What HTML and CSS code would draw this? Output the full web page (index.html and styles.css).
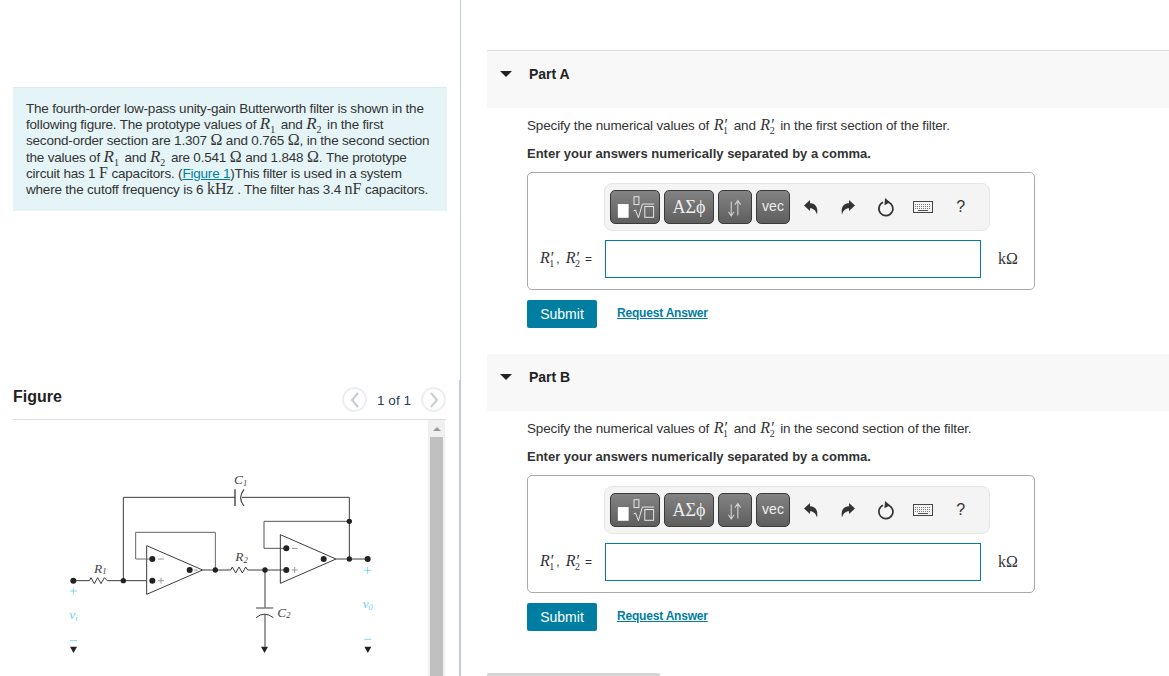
FILE: index.html
```html
<!DOCTYPE html>
<html lang="en">
<head>
  <meta charset="UTF-8" />
  <title>Butterworth filter problem</title>
  <link rel="stylesheet" href="styles.css">
</head>
<body>
  <svg class="icon-defs" aria-hidden="true">
    <symbol id="i-template" viewBox="0 0 49 33">
      <rect x="7" y="13" width="11" height="14" fill="#fff"/>
      <rect x="23.500" y="5.500" width="5" height="8" fill="none" stroke="#e8e8e8"/>
      <path d="M23 20l2 -1 3 8 4 -14h12" fill="none" stroke="#e8e8e8"/>
      <rect x="34.500" y="15.500" width="9" height="11" fill="none" stroke="#e8e8e8"/>
    </symbol>
    <symbol id="i-updown" viewBox="0 0 34 33">
      <path d="M13 10v15M10 21l3 4.500 3 -4.500M20 25v-15M17 13.500l3 -4.500 3 4.500" fill="none" stroke="#cfcfcf" stroke-width="1.200"/>
    </symbol>
    <symbol id="i-undo" viewBox="0 0 14 15">
      <path d="M0 5.500L6 0v3.300C11 3.300 14.500 7 13 14.500 12 10.500 9.500 8.200 6 8.200V11z" fill="#333"/>
    </symbol>
    <symbol id="i-redo" viewBox="0 0 14 15">
      <path d="M14 5.500L8 0v3.300C3 3.300 -.5 7 1 14.500 2 10.500 4.500 8.200 8 8.200V11z" fill="#333"/>
    </symbol>
    <symbol id="i-reset" viewBox="0 0 18 19">
      <path d="M6 4.300A7 7 0 1 0 11 4" fill="none" stroke="#333" stroke-width="1.700"/>
      <path d="M8 0l5 4.200 -5.500 3z" fill="#333"/>
    </symbol>
    <symbol id="i-keyboard" viewBox="0 0 20 12">
      <rect x=".5" y=".5" width="19" height="11" fill="#f4f4f4" stroke="#444"/>
      <path d="M2 3.500h16M2 5.500h16M2 7.500h16" stroke="#777" stroke-dasharray="1 1"/>
      <path d="M5 9.500h10" stroke="#555"/>
    </symbol>
  </svg>

  <div class="page">
    <div class="left">
      <div class="statement">
        The fourth-order low-pass unity-gain Butterworth filter is shown in the<br>
        following figure. The prototype values of <i class="m">R<sub>1</sub></i> and <i class="m">R<sub>2</sub></i> in the first<br>
        second-order section are 1.307 <span class="m">Ω</span> and 0.765 <span class="m">Ω</span>, in the second section<br>
        the values of <i class="m">R<sub>1</sub></i> and <i class="m">R<sub>2</sub></i> are 0.541 <span class="m">Ω</span> and 1.848 <span class="m">Ω</span>. The prototype<br>
        circuit has 1 <span class="m">F</span> capacitors. (<a href="#fig">Figure 1</a>)This filter is used in a system<br>
        where the cutoff frequency is 6 <span class="m">kHz</span> . The filter has 3.4 <span class="m">nF</span> capacitors.
      </div>

      <div class="figure" id="fig">
        <div class="figure-head">
          <h2>Figure</h2>
          <div class="pager">
            <span class="pager-btn"><svg width="10" height="16" viewBox="0 0 10 16"><path d="M8 1L2 8l6 7" fill="none" stroke="#c5ced5" stroke-width="2"/></svg></span>
            <span class="pager-text">1 of 1</span>
            <span class="pager-btn"><svg width="10" height="16" viewBox="0 0 10 16"><path d="M2 1l6 7 -6 7" fill="none" stroke="#c5ced5" stroke-width="2"/></svg></span>
          </div>
        </div>
        <div class="figure-body">
          <div class="figure-canvas">
            <svg class="circuit" width="350" height="216" viewBox="0 0 1050 648">
              <g fill="none" stroke="#3c3c3c" stroke-width="3">
                <path d="M100 362H148l5 -9 10 18 10 -18 10 18 10 -18 9 9H320"/>
                <path d="M250 362V112H585M606 112H928V297"/>
                <path d="M585 88V138" stroke-width="4"/>
                <path d="M612 88Q592 113 612 138" stroke-width="3.500"/>
                <path d="M320 257V403L488 330Z"/>
                <path d="M337 297H287V217H526V330" stroke="#666"/>
                <path d="M488 330H572l5 -9 10 18 10 -18 10 18 10 -18 6 9H738"/>
                <path d="M721 224V370L888 297Z"/>
                <path d="M739 265H672V184H928" stroke="#555"/>
                <path d="M888 297H983"/>
                <path d="M675 330V443M648 444H700"/>
                <path d="M648 473Q674 452 700 473M675 462V560"/>
              </g>
              <g fill="#222">
                <circle cx="100" cy="362" r="9"/>
                <circle cx="250" cy="362" r="8"/>
                <circle cx="337" cy="362" r="9"/>
                <circle cx="337" cy="297" r="9"/>
                <circle cx="449" cy="330" r="9"/>
                <circle cx="526" cy="330" r="8"/>
                <circle cx="675" cy="330" r="8"/>
                <circle cx="739" cy="330" r="9"/>
                <circle cx="739" cy="265" r="9"/>
                <circle cx="851" cy="297" r="9"/>
                <circle cx="928" cy="184" r="8"/>
                <circle cx="928" cy="297" r="8"/>
                <circle cx="983" cy="297" r="9"/>
                <path d="M90 560h21l-10.500 19zM663 560h21l-10.500 19zM973 560h21l-10.500 19z"/>
              </g>
              <g stroke="#999" stroke-width="3">
                <path d="M354 362h18M363 353v18M354 297h18M755 330h18M764 321v18M755 265h18M461 330h12"/>
              </g>
              <g stroke="#6fd0ee" stroke-width="2.500">
                <path d="M90 393h21M100 383v21M973 331h21M983 321v21M90 542h21M973 538h21"/>
              </g>
              <g class="circuit-label">
                <text x="582" y="72">C<tspan class="circuit-sub" dy="5">1</tspan></text>
                <text x="162" y="338">R<tspan class="circuit-sub" dy="5">1</tspan></text>
                <text x="586" y="303">R<tspan class="circuit-sub" dy="5">2</tspan></text>
                <text x="712" y="470">C<tspan class="circuit-sub" dy="5">2</tspan></text>
              </g>
              <g class="circuit-label circuit-label-v">
                <text x="88" y="478">v<tspan class="circuit-sub" dy="5">i</tspan></text>
                <text x="968" y="444">v<tspan class="circuit-sub" dy="5">0</tspan></text>
              </g>
            </svg>
          </div>
          <div class="scrollbar">
            <span class="scroll-up"></span>
            <span class="scroll-thumb"></span>
          </div>
        </div>
      </div>
    </div>

    <div class="right">
      <section class="part">
        <div class="part-head"><span class="caret"></span><h3>Part A</h3></div>
        <div class="part-body">
          <p>Specify the numerical values of <i class="m">R′<sub>1</sub></i> and <i class="m">R′<sub>2</sub></i> in the first section of the filter.</p>
          <p class="strong">Enter your answers numerically separated by a comma.</p>
          <div class="answer">
            <div class="toolbar">
              <span class="tool tool-wide"><svg width="49" height="33"><use href="#i-template"/></svg></span>
              <span class="tool tool-wide tool-greek">ΑΣϕ</span>
              <span class="tool tool-arrows"><svg width="34" height="33"><use href="#i-updown"/></svg></span>
              <span class="tool tool-vec">vec</span>
              <span class="tool-plain tool-undo"><svg width="14" height="15"><use href="#i-undo"/></svg></span>
              <span class="tool-plain tool-redo"><svg width="14" height="15"><use href="#i-redo"/></svg></span>
              <span class="tool-plain tool-reset"><svg width="18" height="19"><use href="#i-reset"/></svg></span>
              <span class="tool-plain tool-keys"><svg width="20" height="12"><use href="#i-keyboard"/></svg></span>
              <span class="tool-plain tool-help">?</span>
            </div>
            <div class="answer-row">
              <label class="answer-label"><i class="m">R′<sub>1</sub></i><span class="comma">,</span><i class="m">R′<sub>2</sub></i><span class="equals">=</span></label>
              <input class="answer-input" type="text" />
              <span class="unit">kΩ</span>
            </div>
          </div>
          <div class="actions">
            <button class="submit" type="button">Submit</button>
            <a class="request" href="#">Request Answer</a>
          </div>
        </div>
      </section>

      <section class="part part-next">
        <div class="part-head"><span class="caret"></span><h3>Part B</h3></div>
        <div class="part-body">
          <p>Specify the numerical values of <i class="m">R′<sub>1</sub></i> and <i class="m">R′<sub>2</sub></i> in the second section of the filter.</p>
          <p class="strong">Enter your answers numerically separated by a comma.</p>
          <div class="answer">
            <div class="toolbar">
              <span class="tool tool-wide"><svg width="49" height="33"><use href="#i-template"/></svg></span>
              <span class="tool tool-wide tool-greek">ΑΣϕ</span>
              <span class="tool tool-arrows"><svg width="34" height="33"><use href="#i-updown"/></svg></span>
              <span class="tool tool-vec">vec</span>
              <span class="tool-plain tool-undo"><svg width="14" height="15"><use href="#i-undo"/></svg></span>
              <span class="tool-plain tool-redo"><svg width="14" height="15"><use href="#i-redo"/></svg></span>
              <span class="tool-plain tool-reset"><svg width="18" height="19"><use href="#i-reset"/></svg></span>
              <span class="tool-plain tool-keys"><svg width="20" height="12"><use href="#i-keyboard"/></svg></span>
              <span class="tool-plain tool-help">?</span>
            </div>
            <div class="answer-row">
              <label class="answer-label"><i class="m">R′<sub>1</sub></i><span class="comma">,</span><i class="m">R′<sub>2</sub></i><span class="equals">=</span></label>
              <input class="answer-input" type="text" />
              <span class="unit">kΩ</span>
            </div>
          </div>
          <div class="actions">
            <button class="submit" type="button">Submit</button>
            <a class="request" href="#">Request Answer</a>
          </div>
        </div>
      </section>

      <div class="next-bar"></div>
    </div>
  </div>
</body>
</html>
```

FILE: styles.css
```css
html, body {
  margin: 0;
  padding: 0;
  height: 676px;
  overflow: hidden;
  background: #fff;
}
body {
  font-family: "Liberation Sans", Arial, sans-serif;
  font-size: 14px;
  color: #333;
}
.icon-defs {
  position: absolute;
  width: 0;
  height: 0;
}
.page {
  display: flex;
  height: 676px;
}

/* left column */
.left {
  width: 460px;
  flex: none;
  border-right: 1px solid #bccfe0;
}
.statement {
  margin: 87px 13px 0;
  padding: 13px 13px 14px;
  height: 124px;
  box-sizing: border-box;
  background: #e5f5f7;
  border-top: 1px solid #dcebee;
  line-height: 16.2px;
  font-size: 13.5px;
  letter-spacing: -0.2px;
  white-space: nowrap;
}
.statement a {
  color: #007ea1;
}
.m {
  font-family: "Liberation Serif", "DejaVu Serif", serif;
  font-size: 16px;
  line-height: 0;
  letter-spacing: 0;
}
.statement i.m {
  font-size: 17px;
  margin-right: 2px;
}
.m sub {
  font-size: 10px;
  font-style: normal;
  line-height: 0;
}
.part-body .m sub {
  margin-left: -4px;
}
.part-body p .m {
  margin: 0 2px 0 1px;
}
.figure {
  margin-top: 169px;
  height: 296px;
  border-right: 1px solid #bccfe0;
}
.figure-head {
  display: flex;
  justify-content: space-between;
  align-items: center;
  margin: 0 13px;
  height: 39px;
  border-bottom: 1px solid #ddd;
}
.figure-head h2 {
  margin: 0;
  font-size: 16px;
  color: #222;
  padding-bottom: 6px;
}
.pager {
  display: flex;
  align-items: center;
}
.pager-btn {
  display: flex;
  align-items: center;
  justify-content: center;
  width: 21px;
  height: 21px;
  border: 2px solid #eee;
  border-radius: 50%;
}
.pager-text {
  width: 54px;
  padding-top: 1px;
  text-align: center;
  color: #27405a;
  font-size: 13.5px;
}
.figure-body {
  display: flex;
  margin: 0 14px 0 13px;
}
.figure-canvas {
  flex: 1;
  padding: 40px 0 0 27px;
  overflow: hidden;
  height: 216px;
}
.circuit {
  display: block;
}
.circuit-label {
  font-family: "Liberation Serif", serif;
  font-style: italic;
  font-size: 40px;
  fill: #444;
}
.circuit-label-v {
  fill: #6fd0ee;
}
.circuit-sub {
  font-size: 26px;
}
.scrollbar {
  width: 17px;
  height: 256px;
  background: #f0f0f0;
  flex: none;
  display: flex;
  flex-direction: column;
  align-items: center;
}
.scroll-up {
  margin-top: 7px;
  border-left: 4px solid transparent;
  border-right: 4px solid transparent;
  border-bottom: 4px solid #999;
}
.scroll-thumb {
  margin-top: 6px;
  width: 13px;
  flex: 1;
  background: #c0c0c0;
}

/* right column */
.right {
  flex: 1;
  padding-left: 26px;
}
.part-head {
  display: flex;
  align-items: flex-start;
  height: 57px;
  margin-top: 50px;
  background: #f8f8f8;
  border-top: 1px solid #ddd;
}
.part-next .part-head {
  margin-top: 26px;
  border-top: 0;
}
.caret {
  margin: 20px 17px 0 13px;
  border-left: 6px solid transparent;
  border-right: 6px solid transparent;
  border-top: 6px solid #222;
}
.part-head h3 {
  margin: 15px 0 0;
  font-size: 14px;
  line-height: 16px;
  color: #222;
}
.part-body {
  padding-left: 40px;
}
.part-body p {
  margin: 0;
  padding-top: 10px;
  line-height: 16px;
  width: 600px;
  font-size: 13.5px;
  letter-spacing: -0.15px;
}
.part-body p.strong {
  padding-top: 12px;
  font-weight: bold;
  font-size: 13px;
  letter-spacing: 0;
}
.answer {
  width: 506px;
  height: 116px;
  margin-top: 10px;
  border: 1px solid #aaa;
  border-radius: 5px;
}
.toolbar {
  display: flex;
  align-items: center;
  box-sizing: border-box;
  width: 386px;
  height: 48px;
  margin: 10px 0 0 76px;
  padding-left: 5px;
  background: #f4f4f4;
  border: 1px solid #e6e6e6;
  border-radius: 8px;
}
.tool {
  display: flex;
  align-items: center;
  justify-content: center;
  box-sizing: border-box;
  height: 34px;
  margin-right: 4px;
  color: #eee;
  background: linear-gradient(#838383, #5e5e5e);
  border: 1px solid #3a3a3a;
  border-radius: 5px;
}
.tool svg {
  display: block;
}
.tool-wide {
  width: 50px;
}
.tool-greek {
  font-family: "Liberation Serif", serif;
  font-size: 18px;
}
.tool-arrows,
.tool-vec {
  width: 34px;
}
.tool-vec {
  font-size: 14px;
  padding-bottom: 2px;
}
.tool-plain {
  display: flex;
  align-items: center;
  justify-content: center;
  width: 37.500px;
  height: 34px;
}
.tool-undo {
  margin-left: -2px;
}
.tool-help {
  font-size: 16px;
  color: #333;
}
.answer-row {
  display: flex;
  align-items: center;
  margin-top: 9px;
}
.answer-label {
  box-sizing: border-box;
  width: 77px;
  padding-left: 12px;
  white-space: nowrap;
  font-size: 12px;
}
.answer-label .m {
  font-size: 16px;
}
.comma {
  margin: 0 6px 0 2px;
}
.equals {
  margin-left: 5px;
}
.answer-input {
  box-sizing: border-box;
  width: 376px;
  height: 38px;
  padding: 0 6px;
  border: 1px solid #007ea1;
  border-radius: 0;
  outline: none;
}
.unit {
  margin-left: 17px;
  font-family: "Liberation Serif", serif;
  font-size: 16px;
}
.actions {
  display: flex;
  align-items: flex-start;
  margin-top: 10px;
}
.submit {
  width: 70px;
  height: 28px;
  padding: 0;
  color: #fff;
  background: #007ea1;
  border: none;
  border-radius: 2px;
  font-family: inherit;
  font-size: 14px;
}
.request {
  margin: 6px 0 0 20px;
  color: #007ea1;
  font-size: 12px;
  font-weight: bold;
  letter-spacing: -0.2px;
}
.next-bar {
  width: 173px;
  height: 10px;
  margin-top: 42px;
  background: #d5d5d5;
  border-radius: 2px;
}
```
